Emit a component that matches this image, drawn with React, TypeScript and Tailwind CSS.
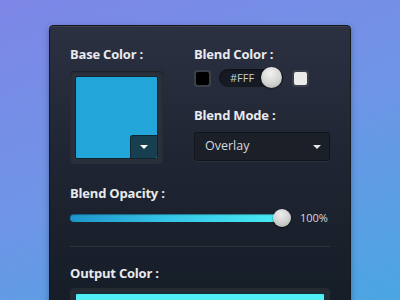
import React from "react";

const font = { fontFamily: '"Open Sans", "DejaVu Sans", sans-serif' };

export default function App() {
  return (
    <div
      className="w-[400px] h-[300px] overflow-hidden bg-[linear-gradient(160deg,#7d86e6_0%,#6f95e6_50%,#4aa6e2_100%)] pl-[49px] pt-[25px]"
      style={font}
    >
      <div className="w-[302px] h-[300px] rounded-t-[4px] border border-[#14171d] bg-[linear-gradient(180deg,#2c3142_0%,#1f2532_45%,#141c26_100%)] shadow-[inset_0_1px_0_rgba(255,255,255,0.08),0_2px_6px_rgba(0,0,0,0.3)] px-[20px] pt-[19px]">
        <div className="flex">
          <div className="w-[124px]">
            <div className="text-[13px] font-bold text-[#e8eaee] leading-[18px] tracking-[-0.2px]">Base Color :</div>
            <div className="mt-[8px] w-[93px] h-[93px] rounded-[4px] bg-[#2a2f3a] p-[5px] shadow-[inset_0_1px_2px_rgba(0,0,0,0.4)]">
              <div className="relative w-full h-full rounded-[2px] bg-[#22a6da] border border-[#0d2630]">
                <div className="absolute right-0 bottom-0 w-[27px] h-[23px] rounded-tl-[3px] rounded-br-[2px] bg-[#173f4f] border-l border-t border-[#0e2832] flex items-center justify-center">
                  <div className="w-0 h-0 border-l-[4px] border-r-[4px] border-t-[4px] border-l-transparent border-r-transparent border-t-white" />
                </div>
              </div>
            </div>
          </div>
          <div className="flex-1">
            <div className="text-[13px] font-bold text-[#e8eaee] leading-[18px] tracking-[-0.2px]">Blend Color :</div>
            <div className="mt-[6px] flex items-center">
              <div className="w-[17px] h-[17px] rounded-[3px] bg-[#3a3f48] p-[2px]">
                <div className="w-full h-full rounded-[2px] bg-black" />
              </div>
              <div className="ml-[8px] relative w-[64px] h-[18px] rounded-full bg-[#161a22] shadow-[inset_0_1px_2px_rgba(0,0,0,0.5)]">
                <span className="absolute left-[11px] top-0 leading-[18px] text-[11px] text-[#c8ccd2]">#FFF</span>
                <div className="absolute right-[1px] top-[-2px] w-[21px] h-[21px] rounded-full bg-[radial-gradient(circle_at_45%_30%,#f2f2f2_0%,#d4d4d4_55%,#a9a9a9_100%)] shadow-[0_1px_2px_rgba(0,0,0,0.5)]" />
              </div>
              <div className="ml-[9px] w-[17px] h-[17px] rounded-[3px] bg-[#3a3f48] p-[2px]">
                <div className="w-full h-full rounded-[2px] bg-[#ebebeb]" />
              </div>
            </div>
            <div className="mt-[19px] text-[13px] font-bold text-[#e8eaee] leading-[18px] tracking-[-0.2px]">Blend Mode :</div>
            <div className="mt-[8px] w-[136px] h-[29px] rounded-[3px] bg-[#1b1f27] border border-[#11141a] shadow-[0_1px_0_rgba(255,255,255,0.06)] flex items-center justify-between pl-[10px] pr-[8px]">
              <span className="text-[12.5px] text-[#d6d9de]">Overlay</span>
              <div className="w-0 h-0 border-l-[4px] border-r-[4px] border-t-[4px] border-l-transparent border-r-transparent border-t-[#e6e6e6]" />
            </div>
          </div>
        </div>

        <div className="mt-[20px] text-[13px] font-bold text-[#e8eaee] leading-[18px] tracking-[-0.2px]">Blend Opacity :</div>
        <div className="mt-[6px] flex items-center h-[20px]">
          <div className="relative w-[220px] h-[8px] rounded-full bg-[linear-gradient(90deg,#1e95cc_0%,#36c6e8_45%,#4aeef5_100%)] shadow-[inset_0_1px_1px_rgba(0,0,0,0.4)]">
            <div className="absolute right-[-1px] top-[-5px] w-[18px] h-[18px] rounded-full bg-[radial-gradient(circle_at_45%_30%,#ececec_0%,#cfcfcf_55%,#a5a5a5_100%)] shadow-[0_1px_2px_rgba(0,0,0,0.6)]" />
          </div>
          <span className="ml-[10px] text-[11px] text-[#d6d9de]">100%</span>
        </div>

        <div className="mt-[18px] h-px w-[260px] bg-[#2d323b]" />

        <div className="mt-[17px] text-[13px] font-bold text-[#e8eaee] leading-[18px] tracking-[-0.2px]">Output Color :</div>
        <div className="mt-[6px] w-[260px] h-[40px] rounded-[4px] bg-[#252a33] px-[5px] pt-[5px]">
          <div className="w-full h-full rounded-[2px] bg-[#4ff0f6] border border-[#0d3036]" />
        </div>
      </div>
    </div>
  );
}
